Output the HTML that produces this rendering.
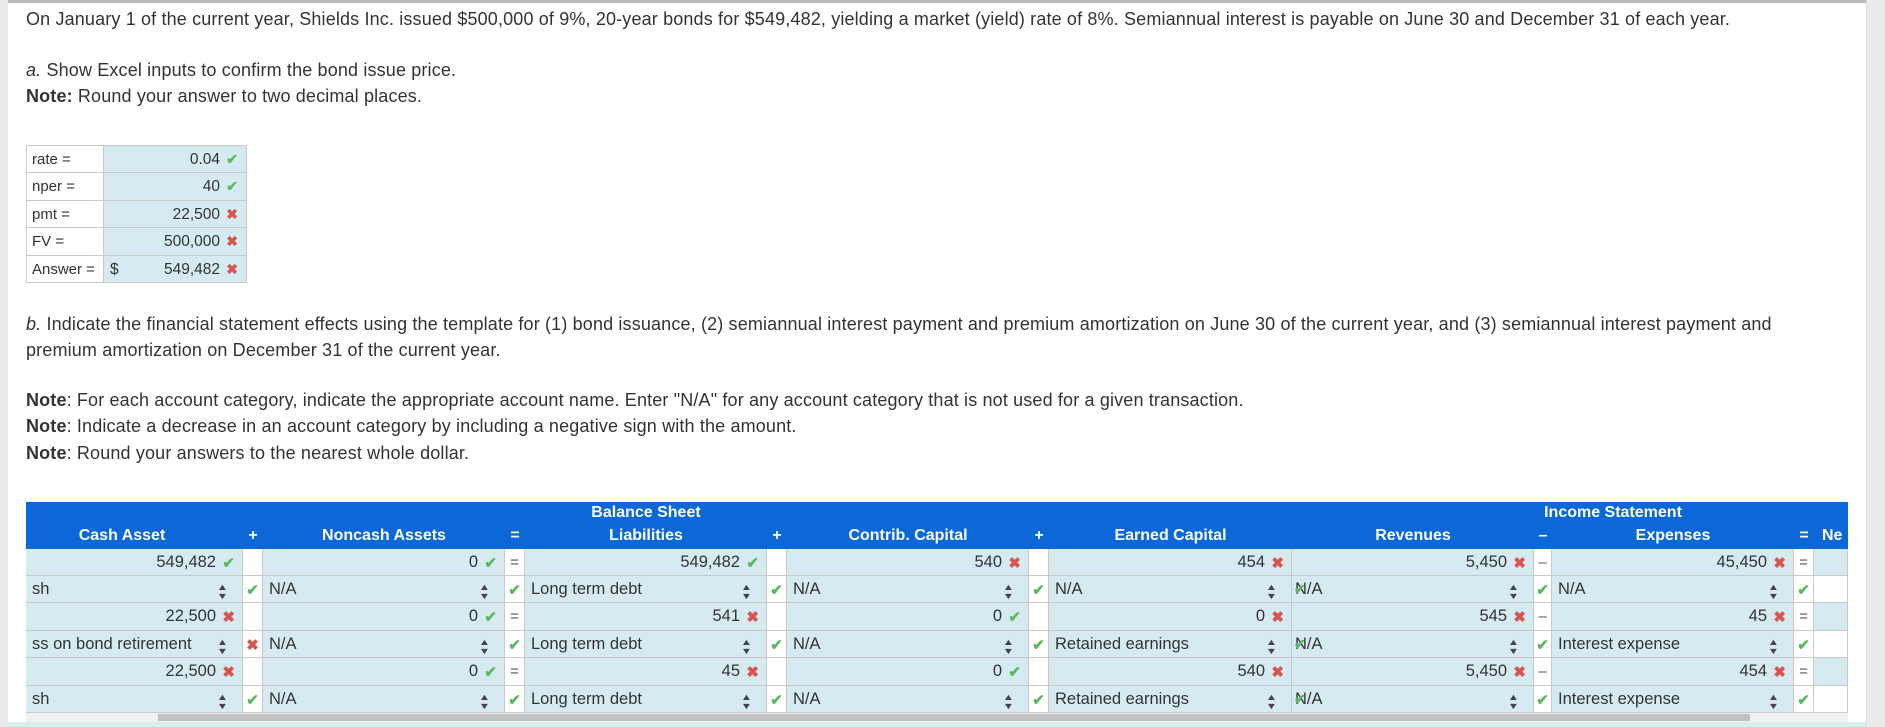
<!DOCTYPE html>
<html><head><meta charset="utf-8"><style>
*{margin:0;padding:0;box-sizing:border-box}
body{width:1885px;height:727px;overflow:hidden;background:#fff;font-family:"Liberation Sans",sans-serif;color:#333;position:relative}
.a{position:absolute;white-space:nowrap}
.t{font-size:18px;left:26px;letter-spacing:0.15px}
.c{position:absolute;background:#d5eaf1;border-right:1px solid #c9c9c9;border-bottom:1px solid #c9c9c9;overflow:hidden;font-size:16.5px}
.w{background:#fff}
.ok{color:#5cb85c;font-weight:bold}
.no{color:#d9534f;font-weight:bold}
.ar{position:absolute;color:#444;line-height:1}
.h{position:absolute;color:#fff;font-weight:bold;font-size:16px;text-align:center;white-space:nowrap}
</style></head><body>
<div class="a" style="left:0;top:0;width:1885px;height:3px;background:#bbb"></div>
<div class="a" style="left:0;top:0;width:8px;height:727px;background:#e9eaec"></div>
<div class="a" style="left:1866px;top:0;width:19px;height:727px;background:#e9eaec;border-left:1px solid #ddd"></div>

<div class="a t" style="top:9px">On January 1 of the current year, Shields Inc. issued $500,000 of 9%, 20-year bonds for $549,482, yielding a market (yield) rate of 8%. Semiannual interest is payable on June 30 and December 31 of each year.</div>
<div class="a t" style="top:60px"><i>a.</i> Show Excel inputs to confirm the bond issue price.</div>
<div class="a t" style="top:86px"><b>Note:</b> Round your answer to two decimal places.</div>

<div id="small"></div>

<div class="a t" style="top:314px"><i>b.</i> Indicate the financial statement effects using the template for (1) bond issuance, (2) semiannual interest payment and premium amortization on June 30 of the current year, and (3) semiannual interest payment and</div>
<div class="a t" style="top:340px">premium amortization on December 31 of the current year.</div>
<div class="a t" style="top:390px"><b>Note</b>: For each account category, indicate the appropriate account name. Enter "N/A" for any account category that is not used for a given transaction.</div>
<div class="a t" style="top:416px"><b>Note</b>: Indicate a decrease in an account category by including a negative sign with the amount.</div>
<div class="a t" style="top:443px"><b>Note</b>: Round your answers to the nearest whole dollar.</div>

<div class="a" style="left:26px;top:502px;width:1822px;height:47px;background:#0b68d6"></div>
<div id="tbl"></div>
<div class="a" style="left:26px;top:713px;width:1822px;height:9px;background:#f1f1f1"></div>
<div class="a" style="left:158px;top:714px;width:1592px;height:7px;background:#c1c1c1"></div>
<div class="a" style="left:8px;top:722px;width:1858px;height:5px;background:#d6f0ef"></div>

<script>
var CK='<span class="ok">&#10004;</span>',XX='<span class="no">&#10006;</span>';
var s='';
var sr=[145,173,201,228,256,283],lab=['rate =','nper =','pmt =','FV =','Answer ='],val=['0.04','40','22,500','500,000','549,482'],ic=[CK,CK,XX,XX,XX];
for(var i=0;i<5;i++){var y=sr[i],h=sr[i+1]-y;
s+='<div class="c w" style="left:26px;top:'+y+'px;width:78px;height:'+h+'px;font-size:15px;padding:5px 5px;'+(i==0?'border-top:1px solid #c9c9c9;':'')+'border-left:1px solid #c9c9c9">'+lab[i]+'</div>';
s+='<div class="c" style="left:104px;top:'+y+'px;width:143px;height:'+h+'px;font-size:15.5px;'+(i==0?'border-top:1px solid #c9c9c9;':'')+'">'+(i==4?'<span class="a" style="left:6px;top:5px">$</span>':'')+'<span class="a" style="right:26px;top:5px">'+val[i]+'</span><span class="a" style="right:8px;top:5px;font-size:14px">'+ic[i]+'</span></div>';}
document.getElementById('small').outerHTML=s;
s='';
function H(t,l,r,y){s+='<div class="h" style="left:'+l+'px;width:'+(r-l)+'px;top:'+y+'px">'+t+'</div>';}
H('Cash Asset',26,218,527);H('+',243,263,527);H('Noncash Assets',263,505,527);H('=',505,525,527);
H('Balance Sheet',525,767,504);H('Liabilities',525,767,527);H('+',767,787,527);H('Contrib. Capital',787,1029,527);H('+',1029,1049,527);
H('Earned Capital',1049,1292,527);H('Revenues',1292,1534,527);H('&ndash;',1534,1552,527);H('Income Statement',1513,1713,504);H('Expenses',1552,1794,527);H('=',1794,1814,527);
s+='<div class="h" style="left:1822px;top:527px">Ne</div>';
var cols=[[26,243],[263,505],[525,767],[787,1029],[1049,1292],[1292,1534],[1552,1794],[1814,1848]];
var ops=[[243,263],[505,525],[767,787],[1029,1049],[1534,1552],[1794,1814]];
var ry=[549,576,603,631,658,686,713];
var V=[[['549,482',CK],['0',CK],['549,482',CK],['540',XX],['454',XX],['5,450',XX],['45,450',XX]],
[['22,500',XX],['0',CK],['541',XX],['0',CK],['0',XX],['545',XX],['45',XX]],
[['22,500',XX],['0',CK],['45',XX],['0',CK],['540',XX],['5,450',XX],['454',XX]]];
var S=[[['sh',CK],['N/A',CK],['Long term debt',CK],['N/A',CK],['N/A',CK],['N/A',CK],['N/A',CK]],
[['ss on bond retirement',XX],['N/A',CK],['Long term debt',CK],['N/A',CK],['Retained earnings',CK],['N/A',CK],['Interest expense',CK]],
[['sh',CK],['N/A',CK],['Long term debt',CK],['N/A',CK],['Retained earnings',CK],['N/A',CK],['Interest expense',CK]]];
var ARR='<span class="ar" style="right:15px;top:7px"><span style="display:block;font-size:9px;transform:scaleX(1.3)">&#9650;</span><span style="display:block;font-size:9px;margin-top:0px;transform:scaleX(1.3)">&#9660;</span></span>';
for(var r=0;r<6;r++){var y=ry[r],h=ry[r+1]-y,isV=r%2==0,k=r>>1;
 for(var c=0;c<8;c++){var L=cols[c][0],R=cols[c][1];var inner='';
  if(c<7){if(isV){var d=V[k][c];inner='<span class="a" style="right:26px;top:4px">'+d[0]+'</span><span class="a" style="right:7px;top:5px;font-size:15px">'+d[1]+'</span>';}
   else{inner='<span class="a" style="left:'+(c==5?3:6)+'px;top:4px">'+S[k][c][0]+'</span>'+ARR;
    if(c==5)inner+='<span class="a" style="left:2px;top:5px;font-size:14px">'+CK+'</span>';}}
  s+='<div class="c'+((c==7&&!isV)?' w':'')+'" style="left:'+L+'px;top:'+y+'px;width:'+(R-L)+'px;height:'+h+'px">'+inner+'</div>';}
 for(var o=0;o<6;o++){var L=ops[o][0],R=ops[o][1];var ic2='';
  if(isV){ic2=['','=','','','&ndash;','='][o];}
  else{var idx=[0,1,2,3,5,6][o];ic2=S[k][idx][1];}
  s+='<div class="c w" style="left:'+L+'px;top:'+y+'px;width:'+(R-L)+'px;height:'+h+'px;text-align:center;padding-top:5px;font-size:15px;color:#555">'+ic2+'</div>';}
}
document.getElementById('tbl').outerHTML=s;
</script>
</body></html>
